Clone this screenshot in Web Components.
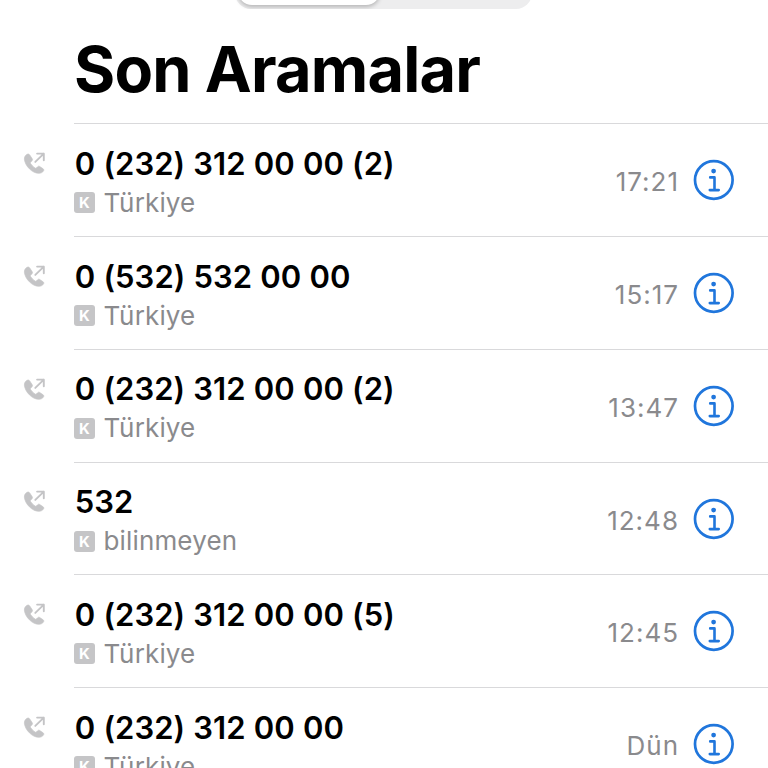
<!DOCTYPE html>
<html lang="tr">
<head>
<meta charset="utf-8">
<title>Son Aramalar</title>
<style>
html,body{margin:0;height:768px;overflow:hidden;background:#fff}
</style>
</head>
<body>
<recents-screen></recents-screen>
<script>
const define = (name, markup, setup) => customElements.define(name, class extends HTMLElement {
  connectedCallback() {
    if (this.shadowRoot) return;
    const root = this.attachShadow({ mode: 'open' });
    root.innerHTML = markup;
    if (setup) setup(this, root);
  }
});

define('segmented-control', `
<style>
:host{display:flex;justify-content:center;height:9px;overflow:hidden;padding-right:2px}
.track{box-sizing:border-box;width:297px;height:54px;margin-top:-45px;padding:3px;border-radius:16px;background:#ededee;display:flex}
.thumb{width:142px;height:47px;border-radius:14px;background:#fff;box-shadow:0 2px 4px rgba(0,0,0,.24)}
</style><div class="track"><div class="thumb"></div></div>`);

define('outgoing-icon', `
<style>:host{display:block;width:24px;height:24px}svg{display:block}</style>
<svg width="24" height="24" viewBox="0 0 24 24">
<path fill="#c4c4c6" stroke="#c4c4c6" stroke-width=".7" stroke-linejoin="round" d="M4.200 3.300C2.500 4.200 1.200 5.800 1.400 8.200c.3 3.300 2.300 6.900 5 9.600 2.700 2.700 6.100 4.500 9.400 4.500 2.300 0 3.900-1 4.800-2.500.4-.8.2-1.500-.5-2l-3.400-2.300c-.7-.5-1.400-.4-2 .2l-1.300 1.300c-.4.4-.8.4-1.300.1-1.900-1.200-3.500-2.800-4.600-4.700-.3-.5-.2-.9.2-1.300L9 9.800c.6-.6.6-1.300.2-2L6.700 3.900C6.100 3.100 5.200 2.800 4.200 3.300z"/>
<path fill="none" stroke="#c4c4c6" stroke-width="1.900" stroke-linecap="round" stroke-linejoin="round" d="M12.300 10.900 20.800 2.600M14.100 2.600H20.800V9.200"/>
</svg>`);

define('line-badge', `
<style>:host{display:flex;align-items:center;justify-content:center;width:21px;height:21px;border-radius:3px;background:#c5c5c7;color:#fff;font:700 15px/21px Inter,"Liberation Sans",sans-serif}</style><slot></slot>`);

define('info-button', `
<style>:host{display:block;width:42px;height:42px}svg{display:block}</style>
<svg width="42" height="42" viewBox="0 0 42 42" fill="none" stroke="#2076dc">
<circle cx="20.800" cy="21" r="18.800" stroke-width="2.700"/>
<circle cx="20.600" cy="12.100" r="2.400" fill="#2076dc" stroke="none"/>
<path d="M17.200 18.400H21.500V31.100M16.800 31.100H25.700" stroke-width="2.600" stroke-linecap="round" stroke-linejoin="round"/>
</svg>`);

define('call-row', `
<style>
:host{display:flex;box-sizing:border-box;height:112.800px;flex:none;font-family:Inter,"Liberation Sans",sans-serif}
.lead{width:74px;flex:none;box-sizing:border-box;padding:27.700px 0 0 23.200px}
.body{flex:1;display:flex;box-sizing:border-box;border-top:1px solid #d9d9db}
.text{flex:1;padding-top:20.500px}
.num{font-size:31px;line-height:38px;font-weight:600;letter-spacing:.05px;word-spacing:.3px;padding-left:.8px;color:#000;white-space:nowrap}
.sub{display:flex;align-items:center;height:40px;gap:8.500px;font-size:26px;line-height:40px;letter-spacing:.15px;color:#8a8a8d}
.time{font-size:26px;line-height:40px;letter-spacing:1px;color:#8a8a8d;padding-top:38px;margin-right:14px}
info-button{margin:35px 33px 0 0}
</style>
<div class="lead"><outgoing-icon></outgoing-icon></div>
<div class="body"><div class="text"><div class="num"><span></span></div><div class="sub"><line-badge>K</line-badge><span class="place"></span></div></div>
<div class="time"><span></span></div><info-button></info-button></div>`, (el, root) => {
  root.querySelector('.num span').textContent = el.getAttribute('number');
  root.querySelector('.place').textContent = el.getAttribute('place');
  root.querySelector('.time span').textContent = el.getAttribute('time');
});

define('recents-screen', `
<style>
:host{display:flex;flex-direction:column;width:768px;height:768px;overflow:hidden;background:#fff}
segmented-control{flex:none}
h1{margin:0;flex:none;height:114.300px;box-sizing:border-box;padding:20px 0 0 74px;font:700 63px/80px Inter,"Liberation Sans",sans-serif;letter-spacing:-.8px;color:#000}
</style>
<segmented-control></segmented-control>
<h1><span>Son Aramalar</span></h1>
<call-row number="0 (232) 312 00 00 (2)" place="Türkiye" time="17:21"></call-row>
<call-row number="0 (532) 532 00 00" place="Türkiye" time="15:17"></call-row>
<call-row number="0 (232) 312 00 00 (2)" place="Türkiye" time="13:47"></call-row>
<call-row number="532" place="bilinmeyen" time="12:48"></call-row>
<call-row number="0 (232) 312 00 00 (5)" place="Türkiye" time="12:45"></call-row>
<call-row number="0 (232) 312 00 00" place="Türkiye" time="Dün"></call-row>`);
</script>
</body>
</html>
